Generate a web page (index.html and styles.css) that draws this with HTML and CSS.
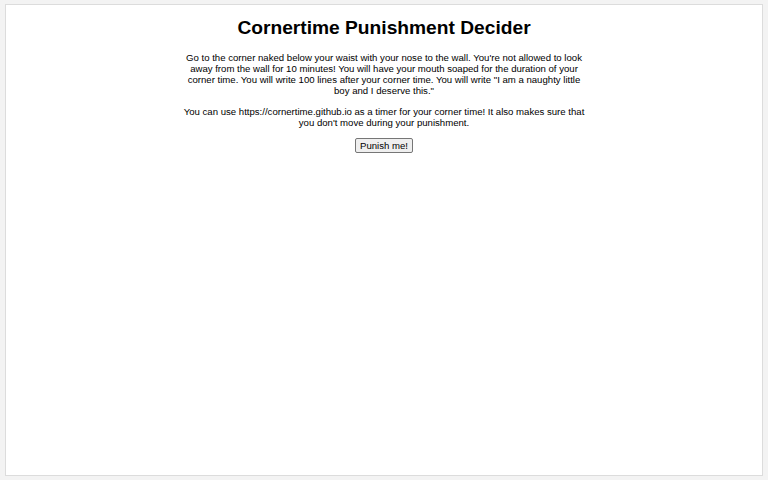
FILE: index.html
```html
<!DOCTYPE html>
<html>
<head>
<meta charset="utf-8">
<title>Cornertime Punishment Decider</title>
<link rel="stylesheet" href="styles.css">
</head>
<body>
<div class="page">
  <h1 class="title">Cornertime Punishment Decider</h1>
  <p class="text">Go to the corner naked below your waist with your nose to the wall. You're not allowed to look away from the wall for 10 minutes! You will have your mouth soaped for the duration of your corner time. You will write 100 lines after your corner time. You will write "I am a naughty little boy and I deserve this."</p>
  <p class="text">You can use https://cornertime.github.io as a timer for your corner time! It also makes sure that you don't move during your punishment.</p>
  <button class="punish">Punish me!</button>
</div>
</body>
</html>
```

FILE: styles.css
```css
html, body {
  margin: 0;
  height: 100%;
}

body {
  background: #f3f3f3;
  padding: 4px 5px 4px 5px;
  box-sizing: border-box;
  font-family: "Liberation Sans", Arial, sans-serif;
  color: #000;
}

.page {
  background: #fff;
  border: 1px solid #dcdcdc;
  height: 100%;
  box-sizing: border-box;
  display: flex;
  flex-direction: column;
  align-items: center;
  padding-top: 12px;
}

.title {
  font-size: 19.2px;
  font-weight: bold;
  margin: 0 0 13px;
  line-height: 22px;
}

.text {
  width: 406px;
  margin: 0 0 10px;
  font-size: 9.6px;
  line-height: 11px;
  text-align: center;
}

.punish {
  margin-top: 0;
  font-family: "Liberation Sans", Arial, sans-serif;
  font-size: 9.6px;
  line-height: 11px;
  padding: 1px 4px;
  background: #efefef;
  border: 1px solid #767676;
  border-radius: 2px;
  color: #000;
}
```
